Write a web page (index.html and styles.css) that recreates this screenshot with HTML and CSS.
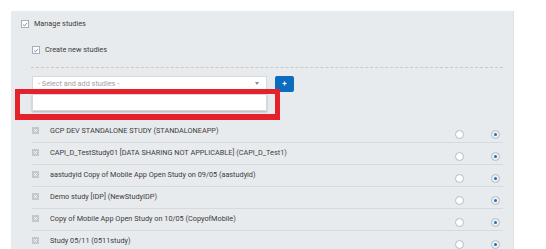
FILE: index.html
```html
<!DOCTYPE html>
<html>
<head>
<meta charset="utf-8">
<link rel="stylesheet" href="styles.css">
</head>
<body>
<div class="panel">
  <label class="check-row">
    <span class="cb"><svg viewBox="0 0 8 8" width="8" height="8"><path d="M1.5 4.2 L3.2 5.8 L6.6 2.2" fill="none" stroke="#2f80d0" stroke-width="1.2"/></svg></span>
    <span>Manage studies</span>
  </label>
  <div class="sub">
    <label class="check-row sub-check">
      <span class="cb"><svg viewBox="0 0 8 8" width="8" height="8"><path d="M1.5 4.2 L3.2 5.8 L6.6 2.2" fill="none" stroke="#2f80d0" stroke-width="1.2"/></svg></span>
      <span>Create new studies</span>
    </label>
    <div class="dash"></div>
    <div class="select-row">
      <div class="select">
        <span class="placeholder">- Select and add studies -</span>
        <span class="caret"></span>
        <div class="dropdown"></div>
      </div>
      <button class="add">+</button>
    </div>
    <ul class="studies">
      <li><svg class="x" viewBox="0 0 7 7" width="7" height="7"><rect width="7" height="7" fill="#c4c7cb"/><path d="M2.2 2.2 L4.8 4.8 M4.8 2.2 L2.2 4.8" stroke="#fff" stroke-width="0.9"/></svg><span class="name">GCP DEV STANDALONE STUDY (STANDALONEAPP)</span><span class="radio"></span><span class="radio on"></span></li>
      <li><svg class="x" viewBox="0 0 7 7" width="7" height="7"><rect width="7" height="7" fill="#c4c7cb"/><path d="M2.2 2.2 L4.8 4.8 M4.8 2.2 L2.2 4.8" stroke="#fff" stroke-width="0.9"/></svg><span class="name">CAPI_D_TestStudy01 [DATA SHARING NOT APPLICABLE] (CAPI_D_Test1)</span><span class="radio"></span><span class="radio on"></span></li>
      <li><svg class="x" viewBox="0 0 7 7" width="7" height="7"><rect width="7" height="7" fill="#c4c7cb"/><path d="M2.2 2.2 L4.8 4.8 M4.8 2.2 L2.2 4.8" stroke="#fff" stroke-width="0.9"/></svg><span class="name">aastudyid Copy of Mobile App Open Study on 09/05 (aastudyid)</span><span class="radio"></span><span class="radio on"></span></li>
      <li><svg class="x" viewBox="0 0 7 7" width="7" height="7"><rect width="7" height="7" fill="#c4c7cb"/><path d="M2.2 2.2 L4.8 4.8 M4.8 2.2 L2.2 4.8" stroke="#fff" stroke-width="0.9"/></svg><span class="name">Demo study [IDP] (NewStudyIDP)</span><span class="radio"></span><span class="radio on"></span></li>
      <li><svg class="x" viewBox="0 0 7 7" width="7" height="7"><rect width="7" height="7" fill="#c4c7cb"/><path d="M2.2 2.2 L4.8 4.8 M4.8 2.2 L2.2 4.8" stroke="#fff" stroke-width="0.9"/></svg><span class="name">Copy of Mobile App Open Study on 10/05 (CopyofMobile)</span><span class="radio"></span><span class="radio on"></span></li>
      <li><svg class="x" viewBox="0 0 7 7" width="7" height="7"><rect width="7" height="7" fill="#c4c7cb"/><path d="M2.2 2.2 L4.8 4.8 M4.8 2.2 L2.2 4.8" stroke="#fff" stroke-width="0.9"/></svg><span class="name">Study 05/11 (0511study)</span><span class="radio"></span><span class="radio on"></span></li>
    </ul>
  </div>
  <div class="highlight"></div>
</div>
</body>
</html>
```
FILE: styles.css
```css
html, body {
  margin: 0;
  padding: 0;
  background: #ffffff;
  font-family: Roboto, "Liberation Sans", sans-serif;
  font-size: 7.3px;
  color: #3c3c3c;
}
.panel {
  position: relative;
  margin: 11px 0 0 11px;
  width: 503px;
  height: 238px;
  background: #e8ebee;
  box-sizing: border-box;
  padding: 8px 10px 0 10px;
  overflow: hidden;
  border-right: 1px solid #dfe2e5;
}
.check-row {
  display: flex;
  align-items: center;
  gap: 5px;
  height: 10px;
  line-height: 10px;
}
.cb {
  width: 8px;
  height: 8px;
  box-sizing: border-box;
  border: 1px solid #a9adb2;
  background: #fff;
  display: flex;
  align-items: center;
  justify-content: center;
}
.cb svg { display: block; width: 7px; height: 7px; }
.sub {
  margin-left: 10px;
}
.sub-check {
  margin-top: 16px;
  margin-left: 1px;
}
.dash {
  margin-top: 12px;
  border-top: 1px dashed #c6c9cd;
}
.select-row {
  display: flex;
  margin-top: 8px;
  margin-left: 1px;
  gap: 8px;
  align-items: flex-start;
}
.select {
  position: relative;
  width: 235px;
  height: 14px;
  box-sizing: border-box;
  background: #fff;
  border: 1px solid #d8dbde;
  display: flex;
  align-items: center;
  padding-left: 5px;
}
.placeholder {
  color: #9da0a3;
  flex: 1;
}
.caret {
  width: 0;
  height: 0;
  border-left: 2.5px solid transparent;
  border-right: 2.5px solid transparent;
  border-top: 3px solid #8a8d90;
  margin-right: 7px;
}
.dropdown {
  position: absolute;
  left: -1px;
  top: 17px;
  width: 235px;
  height: 17px;
  background: #fff;
  box-shadow: 0 1px 2px rgba(0,0,0,0.25);
  border: 1px solid #d6d9dc;
  box-sizing: border-box;
}
.add {
  width: 19px;
  height: 16px;
  border: 0;
  border-radius: 2px;
  background: #0c6dbf;
  color: #fff;
  font-family: Roboto, "Liberation Sans", sans-serif;
  font-size: 8px;
  font-weight: bold;
  padding: 0;
  line-height: 16px;
}
.highlight {
  position: absolute;
  left: 4px;
  top: 78px;
  width: 265px;
  height: 31px;
  box-sizing: border-box;
  border: 5px solid #e5212b;
  border-bottom-width: 6px;
}
.studies {
  list-style: none;
  margin: 29px 0 0 1px;
  padding: 0;
}
.studies li {
  display: flex;
  align-items: center;
  height: 21px;
  border-bottom: 1px solid #d7dadd;
  padding-right: 3px;
}
.x {
  display: block;
  flex: none;
  margin-right: 11px;
  margin-top: -2px;
}
.name {
  flex: 1;
  white-space: nowrap;
  margin-top: -2px;
}
.radio {
  width: 9px;
  height: 9px;
  box-sizing: border-box;
  border-radius: 50%;
  border: 1px solid #b7bbbf;
  background: #fff;
  margin-top: 5px;
  position: relative;
}
.radio + .radio {
  margin-left: 27px;
}
.radio.on {
  background: #eef0f2;
}
.radio.on::after {
  content: "";
  position: absolute;
  left: 2px;
  top: 2px;
  width: 3px;
  height: 3px;
  border-radius: 50%;
  background: #1673c9;
}
```
